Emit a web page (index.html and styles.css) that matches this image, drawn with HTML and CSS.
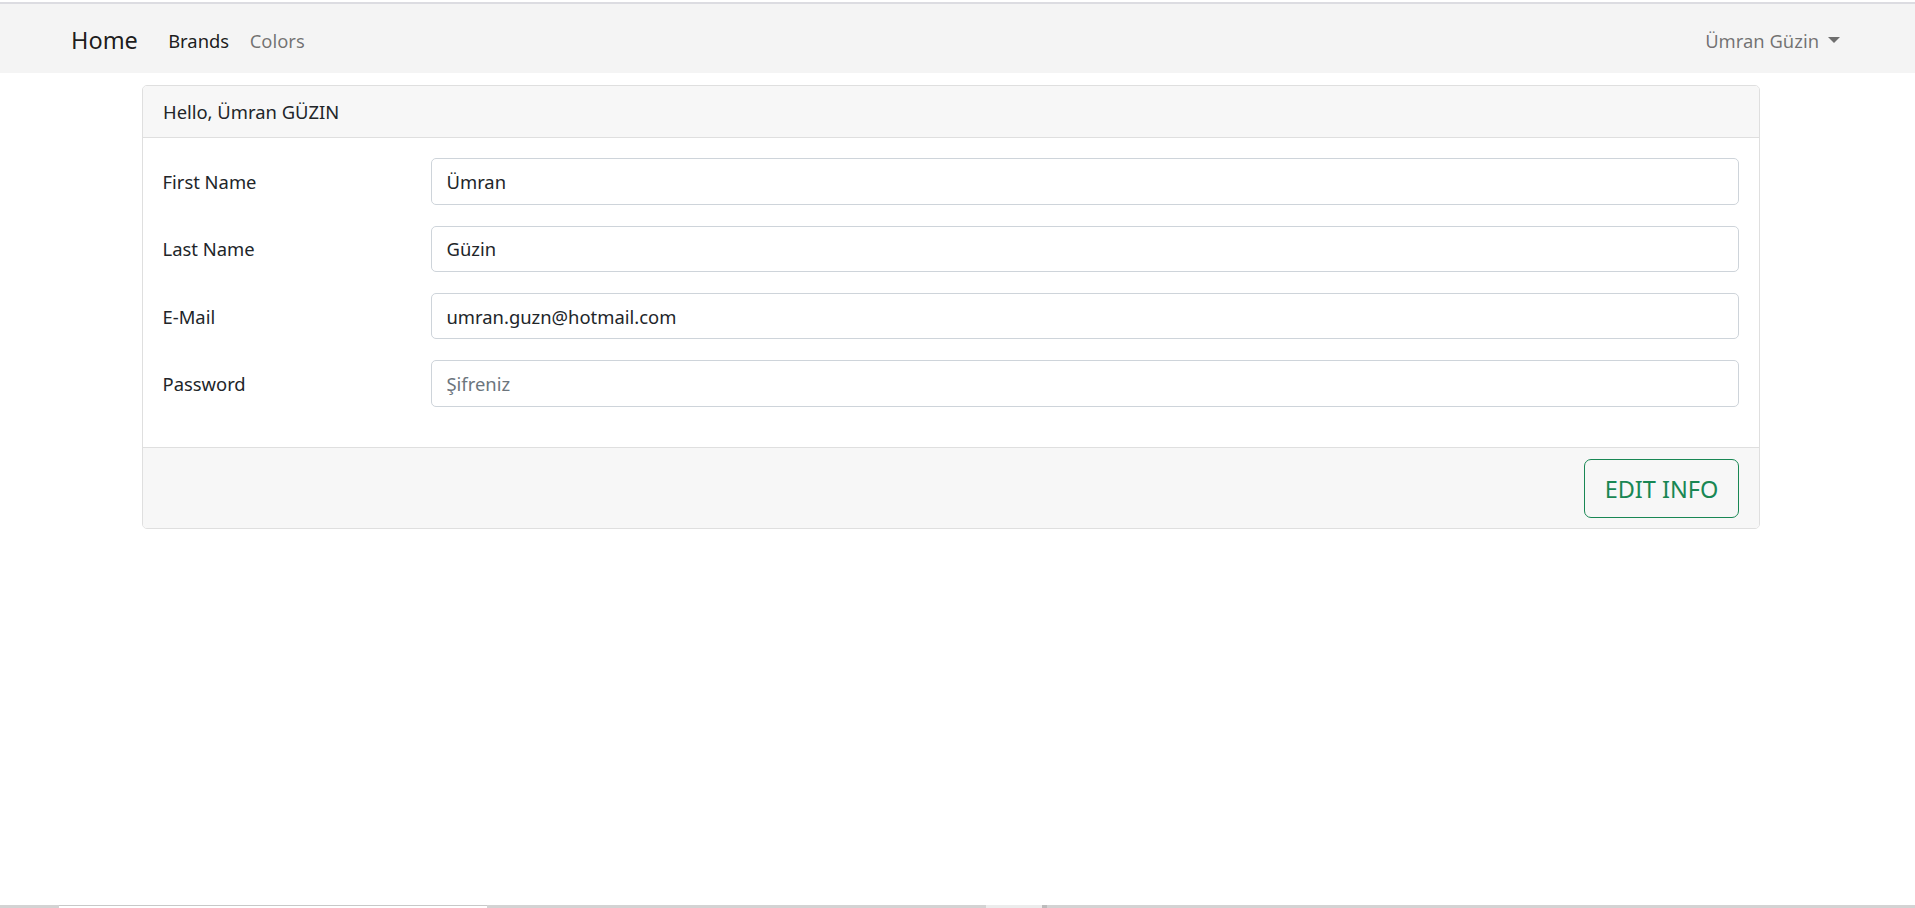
FILE: index.html
```html
<!DOCTYPE html>
<html lang="tr">
<head>
    <meta charset="UTF-8">
    <meta name="viewport" content="width=device-width, initial-scale=1.0">
    <title>Profile</title>
    <link rel="stylesheet" href="styles.css">
</head>
<body>
    <div class="page">
        <nav class="navbar">
            <a class="brand" href="#">Home</a>
            <div class="nav-links">
                <a class="nav-link active" href="#">Brands</a>
                <a class="nav-link" href="#">Colors</a>
            </div>
            <div class="nav-user">
                <a class="nav-link dropdown-toggle" href="#">Ümran Güzin</a>
            </div>
        </nav>

        <div class="card">
            <div class="card-header">Hello, Ümran GÜZIN</div>

            <div class="card-body">
                <div class="form-row">
                    <label for="firstName">First Name</label>
                    <input type="text" id="firstName" value="Ümran">
                </div>
                <div class="form-row">
                    <label for="lastName">Last Name</label>
                    <input type="text" id="lastName" value="Güzin">
                </div>
                <div class="form-row">
                    <label for="email">E-Mail</label>
                    <input type="text" id="email" value="umran.guzn@hotmail.com">
                </div>
                <div class="form-row">
                    <label for="password">Password</label>
                    <input type="password" id="password" placeholder="Şifreniz">
                </div>
            </div>

            <div class="card-footer">
                <button class="btn-edit">EDIT INFO</button>
            </div>
        </div>

        <div class="scroll-strip">
            <span class="strip-thumb"></span>
            <span class="strip-light"></span>
            <span class="strip-edge"></span>
        </div>
    </div>
</body>
</html>
```

FILE: styles.css
```css
* {
    box-sizing: border-box;
}
body {
    margin: 0;
    font-family: "Noto Sans", sans-serif;
    font-size: 18.4px;
    color: #212529;
    background-color: #fff;
}
a {
    text-decoration: none;
}
.page {
    min-height: 100vh;
    display: flex;
    flex-direction: column;
    padding-top: 2px;
}

/* top navigation */
.navbar {
    display: flex;
    align-items: center;
    height: 71px;
    padding: 3px 75px 0 71px;
    border-top: 2px solid #dcdce1;
    background-color: #f4f4f4;
}
.brand {
    font-size: 23.5px;
    color: rgba(0, 0, 0, 0.9);
    margin-right: 20px;
}
.nav-links {
    display: flex;
}
.nav-link {
    padding: 0 10.3px;
    color: rgba(0, 0, 0, 0.55);
}
.nav-link.active {
    color: rgba(0, 0, 0, 0.9);
}
.nav-user {
    margin-left: auto;
}
.nav-user .nav-link {
    padding-right: 0;
}
.dropdown-toggle::after {
    content: "";
    display: inline-block;
    margin-left: 9px;
    vertical-align: 0.25em;
    border-top: 6px solid;
    border-left: 6px solid transparent;
    border-right: 6px solid transparent;
}

/* profile card */
.card {
    width: 1618px;
    margin: 12px 0 0 142px;
    border: 1px solid #dfdfdf;
    border-radius: 5px;
    overflow: hidden;
}
.card-header {
    padding: 10.5px 20px;
    line-height: 30px;
    background-color: #f7f7f7;
    border-bottom: 1px solid #dfdfdf;
}
.card-body {
    padding: 20.3px 20px 20px 19.5px;
}
.form-row {
    display: flex;
    align-items: center;
    margin-bottom: 20.8px;
}
.form-row label {
    width: 268px;
    flex-shrink: 0;
}
.form-row input {
    flex: 1;
    height: 46.5px;
    padding: 0 15px;
    border: 1px solid #ced4da;
    border-radius: 5px;
    font: inherit;
    color: #212529;
    background-color: #fff;
}
.form-row input::placeholder {
    color: #6c757d;
}
.card-footer {
    display: flex;
    justify-content: flex-end;
    padding: 10.5px 20px 10px;
    background-color: #f7f7f7;
    border-top: 1px solid #dfdfdf;
}
.btn-edit {
    width: 155px;
    height: 59.5px;
    padding: 0;
    border: 1px solid #198754;
    border-radius: 7px;
    background-color: transparent;
    color: #198754;
    font-family: inherit;
    font-size: 23.5px;
    cursor: pointer;
}

/* bottom window strip */
.scroll-strip {
    margin-top: auto;
    height: 3px;
    display: flex;
    background-color: #d3d3d3;
}
.strip-thumb {
    width: 428px;
    margin-left: 59px;
    background-color: #fff;
    border-top: 1px solid #c8c8c8;
}
.strip-light {
    width: 56px;
    margin-left: 499px;
    background-color: #ececec;
}
.strip-edge {
    width: 5px;
    background-color: #bcbcbc;
}
```
